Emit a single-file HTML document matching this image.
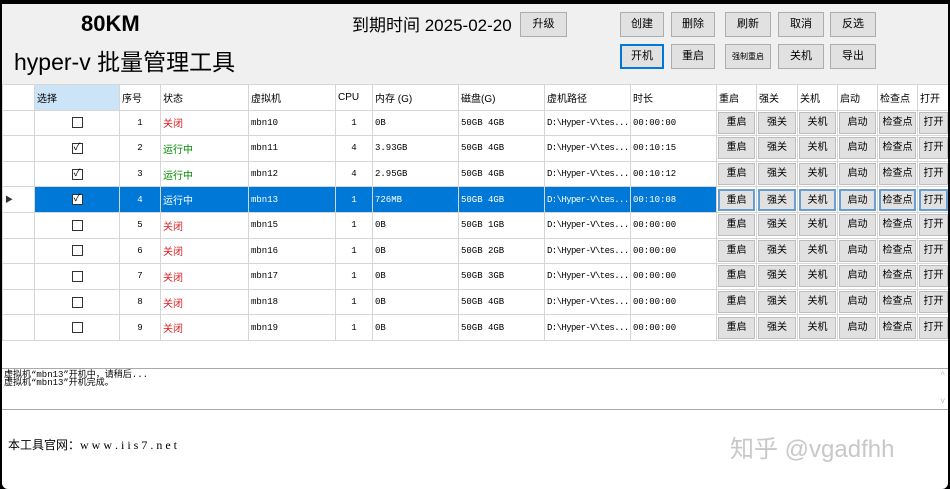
<!DOCTYPE html>
<html><head><meta charset="utf-8"><style>
*{box-sizing:border-box;margin:0;padding:0}
body{width:950px;height:489px;background:#000;position:relative;overflow:hidden;font-family:"Liberation Sans","Noto Sans CJK SC",sans-serif}
#win{position:absolute;left:2px;top:4px;width:946px;height:485px;background:#fff;border-radius:0 0 6px 6px;overflow:hidden}
#hdr{position:absolute;left:0;top:0;width:946px;height:80px;background:#f0f0f0}
.t1{position:absolute;left:79px;top:7px;font-size:22px;font-weight:bold;color:#000}
.t2{position:absolute;left:12px;top:39px;font-size:23px;color:#000}
.t3{position:absolute;left:350px;top:7px;font-size:17px;color:#000}
.b{position:absolute;height:25px;background:#e1e1e1;border:1px solid #adadad;font-size:11px;text-align:center;line-height:23px;color:#000}
table{position:absolute;left:0;top:80px;width:947px;border-collapse:collapse;table-layout:fixed;font-size:9px;font-family:"Liberation Mono","Noto Sans CJK SC",monospace}
td{border:1px solid #d6d6d6;height:25.6px;padding:0 2px;white-space:nowrap;overflow:hidden;color:#000}
td.p{letter-spacing:-0.6px}
tr.h td{font-family:"Liberation Sans","Noto Sans CJK SC",sans-serif;font-size:10px}
.c{text-align:center}
.r{color:#d22;font-family:"Liberation Sans","Noto Sans CJK SC",sans-serif;font-size:10px}.g{color:#080;font-family:"Liberation Sans","Noto Sans CJK SC",sans-serif;font-size:10px}
.cb{display:inline-block;width:11px;height:11px;border:1px solid #333;background:#fff;vertical-align:middle;font-size:10px;line-height:9px;text-align:center}
td.k{padding:1px}
.k span{display:block;height:22px;background:#e1e1e1;border:1px solid #bdbdbd;text-align:center;line-height:20px;font-family:"Liberation Sans","Noto Sans CJK SC",sans-serif;font-size:10px}
tr.s td{background:#0078d7;color:#fff}
tr.s td.k{background:#fff}
tr.s .k span{border:2px solid #6a9ed0;color:#000}
#log{position:absolute;left:0;top:364px;width:946px;height:42px;border-top:1px solid #aaa;border-bottom:1px solid #aaa;font-size:9px;line-height:8px;padding:2px 2px;font-family:"Liberation Mono","Noto Sans CJK SC",monospace}
#foot{position:absolute;left:6px;top:432px;font-size:12px;font-family:"Liberation Serif","Noto Sans CJK SC",serif}
#wm{position:absolute;left:728px;top:425px;font-size:24px;color:#c8c8c8}
</style></head><body><div id="win">
<div id="hdr">
<div class="t1">80KM</div>
<div class="t2">hyper-v 批量管理工具</div>
<div class="t3">到期时间 2025-02-20</div>
<div class="b" style="left:518px;top:8px;width:47px">升级</div>
<div class="b" style="left:618px;top:8px;width:44px">创建</div>
<div class="b" style="left:669px;top:8px;width:44px">删除</div>
<div class="b" style="left:723px;top:8px;width:46px">刷新</div>
<div class="b" style="left:776px;top:8px;width:46px">取消</div>
<div class="b" style="left:828px;top:8px;width:46px">反选</div>
<div class="b" style="left:618px;top:40px;width:44px;border:2px solid #0078d7;line-height:21px">开机</div>
<div class="b" style="left:669px;top:40px;width:44px">重启</div>
<div class="b" style="left:723px;top:40px;width:46px;font-size:8px">强制重启</div>
<div class="b" style="left:776px;top:40px;width:46px">关机</div>
<div class="b" style="left:828px;top:40px;width:46px">导出</div>
</div>
<table>
<colgroup><col style="width:32px"><col style="width:85px"><col style="width:41px"><col style="width:88px"><col style="width:87px"><col style="width:37px"><col style="width:86px"><col style="width:86px"><col style="width:86px"><col style="width:86px"><col style="width:40px"><col style="width:41px"><col style="width:40px"><col style="width:40px"><col style="width:40px"><col style="width:32px"></colgroup>
<tr class="h"><td></td><td style="background:#cce4f7">选择</td><td>序号</td><td>状态</td><td>虚拟机</td><td>CPU</td><td>内存 (G)</td><td>磁盘(G)</td><td>虚机路径</td><td>时长</td><td>重启</td><td>强关</td><td>关机</td><td>启动</td><td>检查点</td><td>打开</td></tr>
<tr><td></td><td class="c"><span class="cb"></span></td><td class="c">1</td><td class="r">关闭</td><td>mbn10</td><td class="c">1</td><td>0B</td><td>50GB 4GB</td><td class="p">D:\Hyper-V\tes...</td><td>00:00:00</td><td class="k"><span>重启</span></td><td class="k"><span>强关</span></td><td class="k"><span>关机</span></td><td class="k"><span>启动</span></td><td class="k"><span>检查点</span></td><td class="k"><span>打开</span></td></tr>
<tr><td></td><td class="c"><span class="cb">✓</span></td><td class="c">2</td><td class="g">运行中</td><td>mbn11</td><td class="c">4</td><td>3.93GB</td><td>50GB 4GB</td><td class="p">D:\Hyper-V\tes...</td><td>00:10:15</td><td class="k"><span>重启</span></td><td class="k"><span>强关</span></td><td class="k"><span>关机</span></td><td class="k"><span>启动</span></td><td class="k"><span>检查点</span></td><td class="k"><span>打开</span></td></tr>
<tr><td></td><td class="c"><span class="cb">✓</span></td><td class="c">3</td><td class="g">运行中</td><td>mbn12</td><td class="c">4</td><td>2.95GB</td><td>50GB 4GB</td><td class="p">D:\Hyper-V\tes...</td><td>00:10:12</td><td class="k"><span>重启</span></td><td class="k"><span>强关</span></td><td class="k"><span>关机</span></td><td class="k"><span>启动</span></td><td class="k"><span>检查点</span></td><td class="k"><span>打开</span></td></tr>
<tr class="s"><td style="background:#fff;font-size:8px;color:#333">▶</td><td class="c"><span class="cb" style="color:#000">✓</span></td><td class="c">4</td><td style="font-family:'Liberation Sans','Noto Sans CJK SC',sans-serif;font-size:10px">运行中</td><td>mbn13</td><td class="c">1</td><td>726MB</td><td>50GB 4GB</td><td class="p">D:\Hyper-V\tes...</td><td>00:10:08</td><td class="k"><span>重启</span></td><td class="k"><span>强关</span></td><td class="k"><span>关机</span></td><td class="k"><span>启动</span></td><td class="k"><span>检查点</span></td><td class="k"><span>打开</span></td></tr>
<tr><td></td><td class="c"><span class="cb"></span></td><td class="c">5</td><td class="r">关闭</td><td>mbn15</td><td class="c">1</td><td>0B</td><td>50GB 1GB</td><td class="p">D:\Hyper-V\tes...</td><td>00:00:00</td><td class="k"><span>重启</span></td><td class="k"><span>强关</span></td><td class="k"><span>关机</span></td><td class="k"><span>启动</span></td><td class="k"><span>检查点</span></td><td class="k"><span>打开</span></td></tr>
<tr><td></td><td class="c"><span class="cb"></span></td><td class="c">6</td><td class="r">关闭</td><td>mbn16</td><td class="c">1</td><td>0B</td><td>50GB 2GB</td><td class="p">D:\Hyper-V\tes...</td><td>00:00:00</td><td class="k"><span>重启</span></td><td class="k"><span>强关</span></td><td class="k"><span>关机</span></td><td class="k"><span>启动</span></td><td class="k"><span>检查点</span></td><td class="k"><span>打开</span></td></tr>
<tr><td></td><td class="c"><span class="cb"></span></td><td class="c">7</td><td class="r">关闭</td><td>mbn17</td><td class="c">1</td><td>0B</td><td>50GB 3GB</td><td class="p">D:\Hyper-V\tes...</td><td>00:00:00</td><td class="k"><span>重启</span></td><td class="k"><span>强关</span></td><td class="k"><span>关机</span></td><td class="k"><span>启动</span></td><td class="k"><span>检查点</span></td><td class="k"><span>打开</span></td></tr>
<tr><td></td><td class="c"><span class="cb"></span></td><td class="c">8</td><td class="r">关闭</td><td>mbn18</td><td class="c">1</td><td>0B</td><td>50GB 4GB</td><td class="p">D:\Hyper-V\tes...</td><td>00:00:00</td><td class="k"><span>重启</span></td><td class="k"><span>强关</span></td><td class="k"><span>关机</span></td><td class="k"><span>启动</span></td><td class="k"><span>检查点</span></td><td class="k"><span>打开</span></td></tr>
<tr><td></td><td class="c"><span class="cb"></span></td><td class="c">9</td><td class="r">关闭</td><td>mbn19</td><td class="c">1</td><td>0B</td><td>50GB 4GB</td><td class="p">D:\Hyper-V\tes...</td><td>00:00:00</td><td class="k"><span>重启</span></td><td class="k"><span>强关</span></td><td class="k"><span>关机</span></td><td class="k"><span>启动</span></td><td class="k"><span>检查点</span></td><td class="k"><span>打开</span></td></tr>
</table>
<div id="log">虚拟机“mbn13”开机中，请稍后...<br>虚拟机“mbn13”开机完成。<span style="position:absolute;right:3px;top:3px;color:#bbb;font-size:8px">^</span><span style="position:absolute;right:3px;bottom:3px;color:#bbb;font-size:8px">v</span></div>
<div id="foot">本工具官网：w w w . i i s 7 . n e t</div>
<div id="wm">知乎 @vgadfhh</div>
</div></body></html>
